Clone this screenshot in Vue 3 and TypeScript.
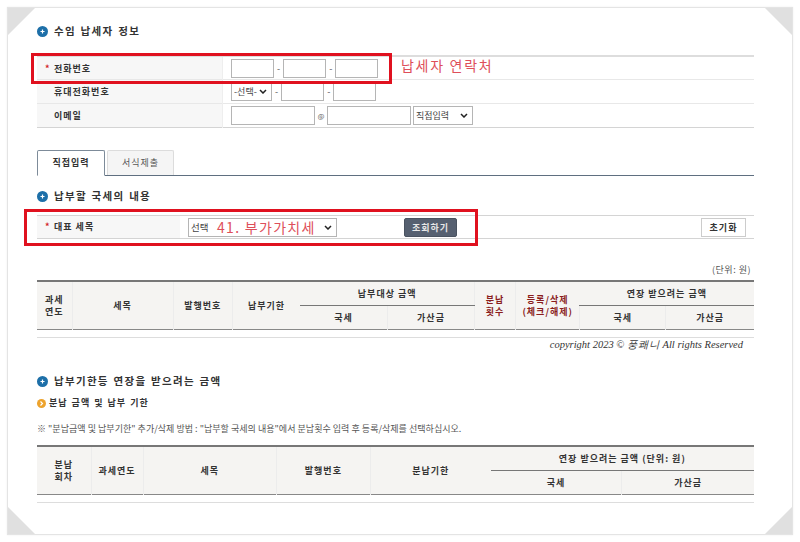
<script setup lang="ts">
const mark = '납세자 연락처'
</script>

<template>
  <div class="page">
    <div class="frame">
      <i class="corner tl"></i><i class="corner tr"></i><i class="corner bl"></i><i class="corner br"></i>

      <h2 class="title first">
        <svg class="ico" viewBox="0 0 11 11"><circle cx="5.5" cy="5.5" r="5.5" fill="#1d6fa8" /><path d="M3.5 5.5h4M5.5 3.5v4" stroke="#fff" stroke-width="1.2" /></svg>
        수임 납세자 정보
      </h2>

      <table class="form contact">
        <tbody>
          <tr class="r1">
            <th><em>*</em>전화번호</th>
            <td>
              <div class="fields">
                <input class="ph" /><span>-</span><input class="ph" /><span>-</span><input class="ph" />
              </div>
            </td>
          </tr>
          <tr class="r2">
            <th>휴대전화번호</th>
            <td>
              <div class="fields tight">
                <select class="sel-phone"><option>-선택-</option></select><span>-</span><input class="ph" /><span>-</span><input class="ph" />
              </div>
            </td>
          </tr>
          <tr class="r3">
            <th>이메일</th>
            <td>
              <div class="fields mail">
                <input class="em" /><span class="at">@</span><input class="em" /><select class="sel-mail"><option>직접입력</option></select>
              </div>
            </td>
          </tr>
        </tbody>
      </table>

      <div class="tabs">
        <div class="tab on">직접입력</div>
        <div class="tab">서식제출</div>
      </div>

      <h2 class="title second">
        <svg class="ico" viewBox="0 0 11 11"><circle cx="5.5" cy="5.5" r="5.5" fill="#1d6fa8" /><path d="M3.5 5.5h4M5.5 3.5v4" stroke="#fff" stroke-width="1.2" /></svg>
        납부할 국세의 내용
      </h2>

      <div class="search">
        <div class="search-label"><em>*</em>대표 세목</div>
        <div class="search-body">
          <div class="sel-tax">
            <span class="sel-text">선택</span>
            <svg class="chev" viewBox="0 0 8 5"><path d="M1 1l3 3 3-3" fill="none" stroke="#222" stroke-width="1.5" /></svg>
          </div>
          <button class="btn-dark">조회하기</button>
          <button class="btn-reset">초기화</button>
        </div>
      </div>

      <div class="unit">(단위: 원)</div>

      <table class="grid g1">
        <colgroup>
          <col style="width:35px" /><col style="width:101px" /><col style="width:59px" /><col style="width:68px" /><col style="width:87px" /><col style="width:87px" /><col style="width:41px" /><col style="width:64px" /><col style="width:86px" /><col style="width:88px" />
        </colgroup>
        <thead>
          <tr>
            <th rowspan="2">과세<br />연도</th>
            <th rowspan="2">세목</th>
            <th rowspan="2">발행번호</th>
            <th rowspan="2">납부기한</th>
            <th colspan="2" class="under">납부대상 금액</th>
            <th rowspan="2" class="dark-red">분납<br />횟수</th>
            <th rowspan="2" class="dark-red">등록/삭제<br />(체크/해제)</th>
            <th colspan="2" class="under">연장 받으려는 금액</th>
          </tr>
          <tr>
            <th>국세</th><th>가산금</th><th>국세</th><th>가산금</th>
          </tr>
        </thead>
      </table>
      <div class="rule"></div>
      <div class="copy">copyright 2023 © 풍쾌니 All rights Reserved</div>

      <h2 class="title third">
        <svg class="ico" viewBox="0 0 11 11"><circle cx="5.5" cy="5.5" r="5.5" fill="#1d6fa8" /><path d="M3.5 5.5h4M5.5 3.5v4" stroke="#fff" stroke-width="1.2" /></svg>
        납부기한등 연장을 받으려는 금액
      </h2>
      <h3 class="sub">
        <svg class="ico-s" viewBox="0 0 9 9"><circle cx="4.5" cy="4.5" r="4.5" fill="#eda32d" /><path d="M3.5 2.5l2 2-2 2" fill="none" stroke="#fff" stroke-width="1.2" /></svg>
        분납 금액 및 납부 기한
      </h3>
      <p class="note">※ "분납금액 및 납부기한" 추가/삭제 방법 : "납부할 국세의 내용"에서 분납횟수 입력 후 등록/삭제를 선택하십시오.</p>

      <table class="grid g2">
        <colgroup>
          <col style="width:54px" /><col style="width:52px" /><col style="width:133px" /><col style="width:94px" /><col style="width:120px" /><col style="width:131px" /><col style="width:132px" />
        </colgroup>
        <thead>
          <tr>
            <th rowspan="2">분납<br />회차</th>
            <th rowspan="2">과세연도</th>
            <th rowspan="2">세목</th>
            <th rowspan="2">발행번호</th>
            <th rowspan="2">분납기한</th>
            <th colspan="2" class="under">연장 받으려는 금액 (단위: 원)</th>
          </tr>
          <tr><th>국세</th><th>가산금</th></tr>
        </thead>
      </table>
      <div class="rule"></div>

      <div class="mark box1"></div>
      <div class="mark box2"></div>
      <div class="note-red n1">{{ mark }}</div>
      <div class="note-red n2">41. 부가가치세</div>
    </div>
  </div>
</template>

<style>
html, body { margin: 0; background: #fff; }
</style>

<style scoped>
.page { width: 800px; height: 542px; padding: 7px; box-sizing: border-box; overflow: hidden; font-family: "Noto Sans CJK KR", "Noto Sans", sans-serif; color: #333; }
.frame { position: relative; width: 786px; height: 528px; box-sizing: border-box; border: 1px solid #e4e4e4; box-shadow: 0 0 2px #eee; padding: 0 39px 0 29px; }
.corner { position: absolute; width: 27px; height: 27px; background: #e0e0e0; }
.tl { left: 0; top: 0; clip-path: polygon(0 0, 100% 0, 0 100%); }
.tr { right: 0; top: 0; clip-path: polygon(0 0, 100% 0, 100% 100%); }
.bl { left: 0; bottom: 0; clip-path: polygon(0 0, 100% 100%, 0 100%); }
.br { right: 0; bottom: 0; clip-path: polygon(100% 0, 100% 100%, 0 100%); }

.title { display: flex; align-items: center; gap: 6px; margin: 0; font-size: 10.5px; line-height: 14px; font-weight: 700; letter-spacing: 1.3px; color: #333; word-spacing: 1px; }
.ico { width: 11px; height: 11px; flex: none; }
.first { margin-top: 16px; }

.form { width: 717px; table-layout: fixed; border-collapse: collapse; margin-top: 17px; border-top: 2px solid #ddd; border-bottom: 1px solid #d4d4d4; }
.form th { width: 168px; background: #f7f7f7; text-align: left; padding: 0 0 0 17px; font-size: 9px; font-weight: 700; letter-spacing: 1px; color: #333; position: relative; border-right: 1px solid #eee; }
.form td { padding: 0 0 0 8px; }
.form tr + tr th, .form tr + tr td { border-top: 1px solid #e8e8e8; }
.r1 th, .r1 td { height: 22px; }
.r2 th, .r2 td { height: 23px; }
.r3 th, .r3 td { height: 23px; }
em { font-style: normal; color: #d2232a; font-weight: 700; }
.form em { position: absolute; left: 8px; top: 5px; }
.fields { display: flex; align-items: center; gap: 3px; font-size: 9px; color: #555; }
.fields input, .fields select { box-sizing: border-box; height: 19px; margin: 0; padding: 0 2px; border: 1px solid #b5b5b5; background: #fff; font: 9px "Noto Sans CJK KR", sans-serif; color: #444; border-radius: 0; }
.fields select {
  appearance: none;
  background: #fff url("data:image/svg+xml,%3Csvg xmlns='http://www.w3.org/2000/svg' width='8' height='5'%3E%3Cpath d='M1 1l3 3 3-3' fill='none' stroke='%23222' stroke-width='1.5'/%3E%3C/svg%3E") no-repeat right 4px center;
}
.ph { width: 43px; }
.fields .sel-phone { width: 41px; }
.em { width: 84px; }
.sel-mail { width: 60px; }
.mail { gap: 0; }
.at { width: 12px; text-align: center; font-size: 7px; }
.mail .sel-mail { margin-left: 2px; }

.tabs { display: flex; gap: 2px; margin-top: 22px; height: 25px; border-bottom: 1px solid #5f6f80; width: 717px; }
.tab { box-sizing: border-box; width: 67px; height: 25px; border: 1px solid #dcdcdc; border-bottom: 0; border-radius: 2px 2px 0 0; background: #f5f5f5; text-align: center; font-size: 9px; line-height: 24px; letter-spacing: 1px; color: #555; }
.tab.on { width: 68px; background: #fff; border: 1px solid #7d8b99; border-bottom: 1px solid #fff; height: 26px; font-weight: 700; color: #333; }

.second { margin-top: 13px; }
.search { display: flex; width: 717px; height: 24px; margin-top: 12px; box-sizing: border-box; border-top: 1px solid #d4d4d4; border-bottom: 1px solid #d4d4d4; }
.search-label { position: relative; width: 143px; background: #f7f7f7; padding-left: 17px; box-sizing: border-box; font-size: 9px; line-height: 22px; font-weight: 700; letter-spacing: 1px; }
.search-label em { position: absolute; left: 8px; top: 0; }
.search-body { flex: 1; display: flex; align-items: center; padding-left: 8px; }
.sel-tax { box-sizing: border-box; width: 149px; height: 19px; border: 1px solid #b5b5b5; display: flex; align-items: center; justify-content: space-between; padding: 0 4px 0 2px; font-size: 9.5px; color: #444; }
.chev { width: 8px; height: 5px; }
.btn-dark, .btn-reset { box-sizing: border-box; height: 19px; padding: 0; font: 700 9px "Noto Sans CJK KR", sans-serif; letter-spacing: 1px; }
.btn-dark { width: 53px; margin-left: 67px; background: #566070; border: 1px solid #4a5360; border-radius: 2px; color: #e8e8e8; }
.btn-reset { width: 45px; margin-left: auto; margin-right: 8px; background: #fff; border: 1px solid #ccc; color: #333; }

.unit { width: 714px; margin-top: 24px; text-align: right; font-size: 9px; line-height: 13px; color: #555; letter-spacing: .5px; }

.grid { width: 717px; table-layout: fixed; border-collapse: collapse; border-top: 2px solid #777; border-bottom: 1px solid #888; }
.grid th { height: 23px; padding: 0; background: #f5f4f2; font-size: 9px; line-height: 12px; font-weight: 700; letter-spacing: 1px; color: #333; border-left: 1px solid #ececec; }
.grid th:first-child { border-left: 0; }
.grid th.under { border-bottom: 1px solid #777; border-left: 0; }
.grid th.dark-red { color: #8a1d1d; }
.g1 { margin-top: 4px; }
.rule { width: 717px; height: 1px; background: #ddd; margin-top: 7px; }
.copy { width: 706px; margin-top: 0; text-align: right; font: italic 10.5px/14px "Liberation Serif", serif; color: #333; }

.third { margin-top: 22px; }
.sub { display: flex; align-items: center; gap: 3px; margin: 8px 0 0; font-size: 9px; line-height: 14px; font-weight: 700; letter-spacing: 1px; color: #333; word-spacing: 1px; }
.ico-s { width: 9px; height: 9px; flex: none; }
.note { margin: 12px 0 0; font-size: 9px; line-height: 13px; color: #555; white-space: nowrap; letter-spacing: .03px; }
.g2 { margin-top: 10px; }
.g2 th { height: 23px; }

.mark { position: absolute; box-sizing: border-box; border: 3px solid #e0111f; pointer-events: none; }
.box1 { left: 23px; top: 45px; width: 361px; height: 31px; }
.box2 { left: 16px; top: 201px; width: 454px; height: 37px; }
.note-red { position: absolute; color: #de4f5a; font-size: 14px; line-height: 18px; letter-spacing: 1.7px; white-space: nowrap; }
.n1 { left: 393px; top: 48px; }
.n2 { left: 209px; top: 210px; letter-spacing: 1.3px; }
</style>
